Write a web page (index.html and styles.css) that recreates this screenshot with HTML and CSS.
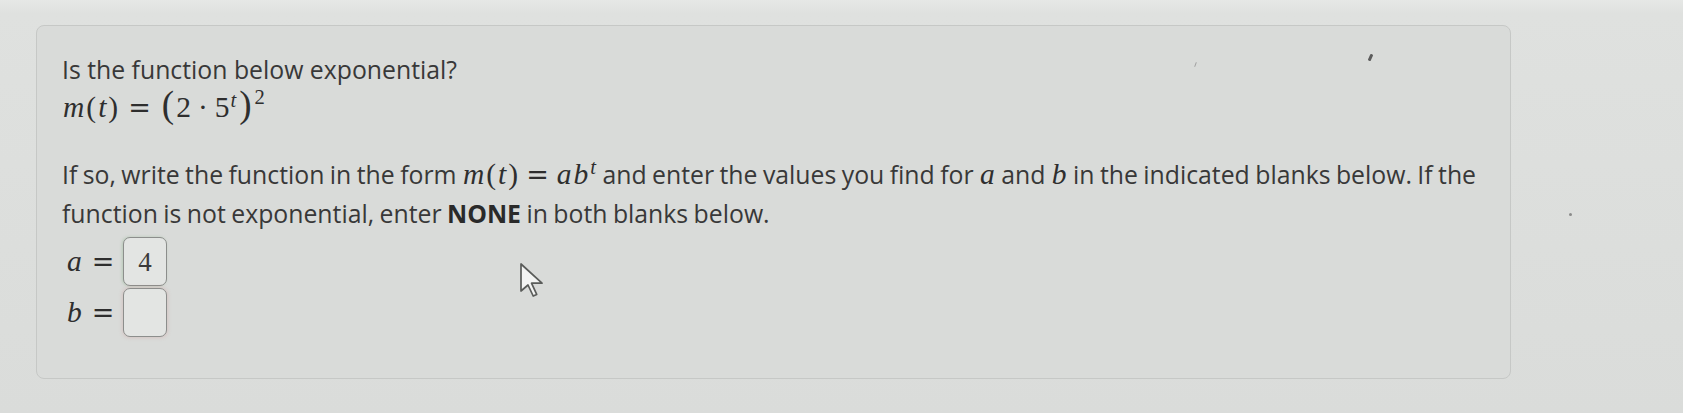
FILE: index.html
```html
<!DOCTYPE html>
<html lang="en">
<head>
<meta charset="utf-8">
<title>Is the function below exponential?</title>
<link rel="stylesheet" href="styles.css">
</head>
<body>
<div class="page">
  <div class="card">
    <p class="q">Is the function below exponential?</p>
    <div class="math-line">
      <span class="math display"><i>m</i><span class="p">(</span><i>t</i><span class="p">)</span><span class="eq">=</span><span class="p big">(</span><span class="mn">2</span><span class="cdot">·</span><span class="mn">5</span><sup><i>t</i></sup><span class="p big">)</span><sup class="mn sq">2</sup></span>
    </div>
    <p class="instr">If so, write the function in the form <span class="math"><i>m</i><span class="p">(</span><i>t</i><span class="p">)</span><span class="eq">=</span><i>a</i><i>b</i><sup><i>t</i></sup></span> and enter the values you find for <span class="math"><i>a</i></span> and <span class="math"><i>b</i></span> in the indicated blanks below. If the function is not exponential, enter <b>NONE</b> in both blanks below.</p>
    <div class="answers">
      <div class="row">
        <span class="label math"><i>a</i><span class="eq">=</span></span>
        <span class="box box-a">4</span>
      </div>
      <div class="row">
        <span class="label math"><i>b</i><span class="eq">=</span></span>
        <span class="box box-b"></span>
      </div>
    </div>
  </div>
  <svg class="cursor" width="26" height="36" viewBox="0 0 26 36">
    <path d="M2 2 L2 29 L9 23 L14.2 34 L17.7 32.4 L12.5 21.2 L23 21.2 Z" fill="#f3f4f3" stroke="#5a5c5a" stroke-width="1.7" stroke-linejoin="round"/>
  </svg>
  <span class="speck speck-1"></span>
  <span class="speck speck-2"></span>
  <span class="speck speck-3"></span>
</div>
</body>
</html>
```

FILE: styles.css
```css
html, body {
  margin: 0;
  padding: 0;
}

body {
  background: #dcdedc;
  width: 1683px;
  height: 413px;
  overflow: hidden;
}

.page {
  position: relative;
  width: 1683px;
  height: 413px;
  padding-top: 25px;
  box-sizing: border-box;
  background: linear-gradient(180deg, #e6e8e6 0px, #dfe1df 14px, #dee0de 80px, #dadcda 413px);
}

.card {
  margin-left: 36px;
  width: 1475px;
  height: 354px;
  box-sizing: border-box;
  padding: 24px 20px 0 25px;
  background: #d9dbd9;
  border: 1px solid #c6c8c6;
  border-radius: 8px;
  font-family: "Open Sans", "Noto Sans", sans-serif;
  font-size: 24.8px;
  line-height: 38px;
  color: #383838;
}

.q {
  margin: 0;
}

.math-line {
  height: 38px;
  white-space: nowrap;
}

.math {
  font-family: "Liberation Serif", "Times New Roman", serif;
  font-size: 29.5px;
  white-space: nowrap;
  word-spacing: 0;
  color: #2e2e2e;
}

.math i {
  font-style: italic;
  padding: 0 1px;
}

.math .p {
  padding: 0 1px;
}

.math .big {
  font-size: 37px;
  line-height: 0;
  padding: 0 2px;
}

.math .eq {
  font-family: "DejaVu Serif", serif;
  font-size: 27px;
  margin: 0 7px;
}

.math.display .eq {
  margin: 0 9px;
}

.math .cdot {
  margin: 0 7px;
}

.math sup {
  font-size: 0.7em;
  line-height: 0;
  vertical-align: 0.5em;
}

.math sup.sq {
  vertical-align: 0.64em;
  margin-left: 1px;
}

.instr {
  margin: 29px 0 0 0;
  width: 1450px;
  word-spacing: -1px;
}

.instr b {
  font-weight: 700;
  color: #2a2a2a;
}

.answers {
  margin-top: 5px;
  display: flex;
  flex-direction: column;
  gap: 2px;
  padding-left: 4px;
}

.row {
  display: flex;
  align-items: center;
  height: 49px;
}

.label {
  display: inline-flex;
  align-items: baseline;
  line-height: 1;
  width: 57px;
}

.label .eq {
  margin: 0 0 0 9px;
}

.box {
  box-sizing: border-box;
  width: 44px;
  height: 49px;
  border: 1.5px solid #8c8e8c;
  border-radius: 7px;
  background: #e3e5e3;
  display: flex;
  align-items: center;
  justify-content: center;
  font-family: "Liberation Serif", "Times New Roman", serif;
  font-size: 27px;
  color: #3a3a3a;
}

.box-a {
  box-shadow: -1px 0 3px rgba(120, 170, 120, 0.35);
}

.box-b {
  box-shadow: 0 0 4px rgba(200, 120, 120, 0.35);
}

.cursor {
  position: absolute;
  left: 519px;
  top: 262px;
}

.speck {
  position: absolute;
  background: #5c5c5c;
  border-radius: 1px;
}

.speck-1 {
  left: 1369px;
  top: 54px;
  width: 3px;
  height: 7px;
  transform: rotate(25deg);
}

.speck-2 {
  left: 1569px;
  top: 213px;
  width: 3px;
  height: 3px;
  border-radius: 50%;
  background: #8a8a8a;
}

.speck-3 {
  left: 1195px;
  top: 62px;
  width: 1px;
  height: 5px;
  background: #a0a0a0;
  transform: rotate(20deg);
}
```
